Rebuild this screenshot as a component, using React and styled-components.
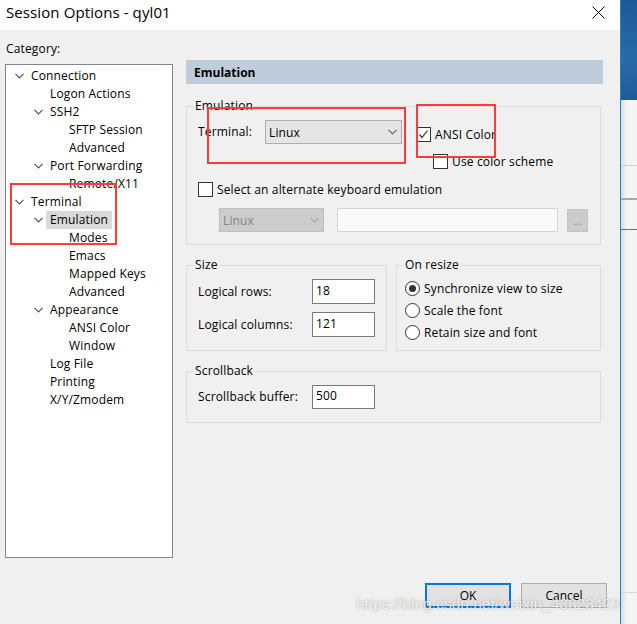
import styled, { createGlobalStyle } from "styled-components";

const GlobalStyle = createGlobalStyle`
	html, body {
		margin: 0;
		padding: 0;
		background: #f0f0f0;
	}
	body {
		font-family: "Open Sans", "Noto Sans", sans-serif;
		font-size: 12px;
		letter-spacing: 0.15px;
		color: #000;
	}
`;

const Screen = styled.div`
	position: relative;
	display: flex;
	width: 637px;
	height: 624px;
	overflow: hidden;
`;

const Dialog = styled.div`
	display: flex;
	flex-direction: column;
	width: 620px;
	flex-shrink: 0;
	background: #f0f0f0;
	border-right: 1px solid #1883d7;
`;

const TitleBar = styled.div`
	display: flex;
	align-items: flex-start;
	justify-content: space-between;
	height: 30px;
	background: #fff;
	padding: 2px 0 0 6px;
	box-sizing: border-box;
`;

const Title = styled.div`
	font-size: 15px;
	line-height: 20px;
	letter-spacing: 0.1px;
`;

const CloseIcon = styled.svg`
	margin: 4px 15px 0 0;
`;

const Main = styled.div`
	display: flex;
	padding-left: 5px;
	gap: 13px;
`;

const LeftCol = styled.div`
	display: flex;
	flex-direction: column;
	width: 168px;
`;

const CategoryLabel = styled.div`
	margin: 11px 0 7px 1px;
	line-height: 16px;
`;

const Tree = styled.div`
	height: 494px;
	box-sizing: border-box;
	background: #fff;
	border: 1px solid #828790;
	padding-top: 2px;
`;

const TreeRow = styled.div`
	display: flex;
	align-items: center;
	height: 18px;
	padding-left: ${(p) => 5 + p.depth * 19}px;
	white-space: nowrap;
`;

const Expander = styled.span`
	display: flex;
	align-items: center;
	width: 20px;
	height: 18px;
	padding-left: 4px;
	box-sizing: border-box;
`;

const TreeLabel = styled.span`
	line-height: 18px;
	padding: 0 4px;
	margin-left: -4px;
	background: ${(p) => (p.selected ? "#d9d9d9" : "transparent")};
`;

const RightCol = styled.div`
	display: flex;
	flex-direction: column;
	width: 417px;
	padding-top: 30px;
`;

const SectionHeader = styled.div`
	height: 24px;
	line-height: 25px;
	background: #bfcddb;
	padding-left: 8px;
	font-weight: 700;
	letter-spacing: 0;
`;

const Group = styled.fieldset`
	margin: ${(p) => p.top}px 0 0 0;
	padding: 6px 8px ${(p) => p.padBottom}px ${(p) => p.padLeft}px;
	border: 1px solid #dcdcdc;
	min-width: 0;
	width: ${(p) => p.width}px;
	box-sizing: border-box;
	flex-shrink: 0;
`;

const Legend = styled.legend`
	padding: 0 2px;
	margin-left: ${(p) => 6 - p.padLeft}px;
	line-height: 16px;
`;

const Row = styled.div`
	display: flex;
	align-items: ${(p) => p.align || "center"};
	margin-top: ${(p) => p.top || 0}px;
	margin-left: ${(p) => p.indent || 0}px;
`;

const FieldLabel = styled.span`
	width: ${(p) => p.width}px;
	line-height: 24px;
	flex-shrink: 0;
`;

const Select = styled.div`
	display: flex;
	align-items: center;
	justify-content: space-between;
	width: ${(p) => p.width}px;
	height: 24px;
	box-sizing: border-box;
	padding: 0 4px 0 3px;
	background: ${(p) => (p.disabled ? "#cccccc" : "#e5e5e5")};
	border: 1px solid ${(p) => (p.disabled ? "#bfbfbf" : "#adadad")};
	color: ${(p) => (p.disabled ? "#838383" : "#000")};
	flex-shrink: 0;
`;

const CheckColumn = styled.div`
	display: flex;
	flex-direction: column;
	margin: 7px 0 0 14px;
`;

const CheckItem = styled.label`
	display: flex;
	align-items: center;
	gap: 4px;
	height: 15px;
	margin-top: ${(p) => p.top || 0}px;
	margin-left: ${(p) => p.indent || 0}px;
	white-space: nowrap;
`;

const Box = styled.span`
	display: flex;
	align-items: center;
	justify-content: center;
	width: 15px;
	height: 15px;
	box-sizing: border-box;
	border: 1px solid #333;
	background: #fff;
	flex-shrink: 0;
`;

const TextBox = styled.div`
	width: ${(p) => p.width}px;
	height: ${(p) => p.height || 24}px;
	box-sizing: border-box;
	margin-left: ${(p) => p.gap || 0}px;
	background: ${(p) => (p.disabled ? "#f9f9f9" : "#fff")};
	border: 1px solid ${(p) => (p.disabled ? "#d6d6d6" : "#7a7a7a")};
	padding-left: 3px;
	line-height: ${(p) => (p.height || 24) - 4}px;
	flex-shrink: 0;
`;

const Ellipsis = styled.div`
	width: 21px;
	height: 23px;
	box-sizing: border-box;
	background: #cccccc;
	border: 1px solid #c4c4c4;
	color: #8a8a8a;
	text-align: center;
	line-height: 22px;
	font-size: 11px;
	letter-spacing: 0;
	margin-left: 9px;
`;

const SplitRow = styled.div`
	display: flex;
	gap: 9px;
	margin-top: 12px;
`;

const RadioList = styled.div`
	margin-top: -2px;
`;

const RadioItem = styled.div`
	display: flex;
	align-items: center;
	gap: 4px;
	height: 22px;
	white-space: nowrap;
`;

const Radio = styled.span`
	display: flex;
	align-items: center;
	justify-content: center;
	width: 15px;
	height: 15px;
	box-sizing: border-box;
	border-radius: 50%;
	border: 1px solid #333;
	background: #fff;
	&::after {
		content: "";
		width: 7px;
		height: 7px;
		border-radius: 50%;
		background: ${(p) => (p.checked ? "#333" : "transparent")};
	}
`;

const Footer = styled.div`
	display: flex;
	justify-content: flex-end;
	gap: 10px;
	margin-top: 25px;
	padding-right: 13px;
`;

const Button = styled.button`
	width: 86px;
	height: 25px;
	box-sizing: border-box;
	background: #e1e1e1;
	border: ${(p) => (p.primary ? "2px solid #0078d7" : "1px solid #adadad")};
	font-family: inherit;
	font-size: 12px;
	color: #000;
	padding: 0;
`;

const BackWindow = styled.div`
	flex: 1;
	display: flex;
	flex-direction: column;
	background: linear-gradient(to right, #dcdcdc, #f4f4f4 6px);
`;

const Desktop = styled.div`
	height: 100px;
	background: linear-gradient(to bottom, #1b5a96, #2a6aa8 60%, #1e5c98);
`;

const BackLine = styled.div`
	margin-top: ${(p) => p.top}px;
	height: ${(p) => p.size || 1}px;
	background: ${(p) => p.color};
`;

const Mark = styled.div`
	position: absolute;
	left: ${(p) => p.x}px;
	top: ${(p) => p.y}px;
	width: ${(p) => p.w}px;
	height: ${(p) => p.h}px;
	box-sizing: border-box;
	border: 2px solid #ff3b3b;
	pointer-events: none;
`;

const Watermark = styled.div`
	position: absolute;
	left: 356px;
	top: 595px;
	font-family: "Liberation Sans", Arial, sans-serif;
	font-size: 15.5px;
	letter-spacing: 0;
	color: rgba(255, 255, 255, 0.8);
	text-shadow: 0 0 2px rgba(70, 70, 70, 0.5);
	white-space: nowrap;
	pointer-events: none;
`;

const Chevron = ({ color = "#555" }) => (
	<svg width="9" height="6" viewBox="0 0 9 6">
		<path d="M0.5 0.8 L4.5 4.8 L8.5 0.8" fill="none" stroke={color} strokeWidth="1.2" />
	</svg>
);

const tree = [
	{ label: "Connection", depth: 0, open: true },
	{ label: "Logon Actions", depth: 1 },
	{ label: "SSH2", depth: 1, open: true },
	{ label: "SFTP Session", depth: 2 },
	{ label: "Advanced", depth: 2 },
	{ label: "Port Forwarding", depth: 1, open: true },
	{ label: "Remote/X11", depth: 2 },
	{ label: "Terminal", depth: 0, open: true },
	{ label: "Emulation", depth: 1, open: true, selected: true },
	{ label: "Modes", depth: 2 },
	{ label: "Emacs", depth: 2 },
	{ label: "Mapped Keys", depth: 2 },
	{ label: "Advanced", depth: 2 },
	{ label: "Appearance", depth: 1, open: true },
	{ label: "ANSI Color", depth: 2 },
	{ label: "Window", depth: 2 },
	{ label: "Log File", depth: 1 },
	{ label: "Printing", depth: 1 },
	{ label: "X/Y/Zmodem", depth: 1 },
];

export default function App() {
	return (
		<Screen>
			<GlobalStyle />
			<Dialog>
				<TitleBar>
					<Title>Session Options - qyl01</Title>
					<CloseIcon width="13" height="13" viewBox="0 0 13 13">
						<path d="M0.5 0.5 L12.5 12.5 M12.5 0.5 L0.5 12.5" stroke="#000" strokeWidth="1" />
					</CloseIcon>
				</TitleBar>

				<Main>
					<LeftCol>
						<CategoryLabel>Category:</CategoryLabel>
						<Tree>
							{tree.map((item, i) => (
								<TreeRow key={i} depth={item.depth}>
									<Expander>{item.open && <Chevron />}</Expander>
									<TreeLabel selected={item.selected}>{item.label}</TreeLabel>
								</TreeRow>
							))}
						</Tree>
					</LeftCol>

					<RightCol>
						<SectionHeader>Emulation</SectionHeader>

						<Group top={14} width={415} padLeft={11} padBottom={12}>
							<Legend padLeft={11}>Emulation</Legend>
							<Row align="flex-start">
								<FieldLabel width={67}>Terminal:</FieldLabel>
								<Select width={137}>
									Linux
									<Chevron color="#666" />
								</Select>
								<CheckColumn>
									<CheckItem>
										<Box>
											<svg width="11" height="11" viewBox="0 0 11 11">
												<path d="M1.5 5.5 L4 8.5 L9.5 1.5" fill="none" stroke="#333" strokeWidth="1.2" />
											</svg>
										</Box>
										ANSI Color
									</CheckItem>
									<CheckItem top={12} indent={17}>
										<Box />
										Use color scheme
									</CheckItem>
								</CheckColumn>
							</Row>
							<Row top={13}>
								<CheckItem>
									<Box />
									Select an alternate keyboard emulation
								</CheckItem>
							</Row>
							<Row top={11} indent={21}>
								<Select width={105} disabled>
									Linux
									<Chevron color="#a5a5a5" />
								</Select>
								<TextBox width={221} gap={13} disabled />
								<Ellipsis>...</Ellipsis>
							</Row>
						</Group>

						<SplitRow>
							<Group top={0} width={201} padLeft={11} padBottom={13}>
								<Legend padLeft={11}>Size</Legend>
								<Row>
									<FieldLabel width={114}>Logical rows:</FieldLabel>
									<TextBox width={63} height={25}>18</TextBox>
								</Row>
								<Row top={8}>
									<FieldLabel width={114}>Logical columns:</FieldLabel>
									<TextBox width={63} height={25}>121</TextBox>
								</Row>
							</Group>
							<Group top={0} width={205} padLeft={8} padBottom={6}>
								<Legend padLeft={8}>On resize</Legend>
								<RadioList>
									<RadioItem>
										<Radio checked />
										Synchronize view to size
									</RadioItem>
									<RadioItem>
										<Radio />
										Scale the font
									</RadioItem>
									<RadioItem>
										<Radio />
										Retain size and font
									</RadioItem>
								</RadioList>
							</Group>
						</SplitRow>

						<Group top={12} width={415} padLeft={11} padBottom={13}>
							<Legend padLeft={11}>Scrollback</Legend>
							<Row>
								<FieldLabel width={114}>Scrollback buffer:</FieldLabel>
								<TextBox width={63}>500</TextBox>
							</Row>
						</Group>
					</RightCol>
				</Main>

				<Footer>
					<Button primary>OK</Button>
					<Button>Cancel</Button>
				</Footer>
			</Dialog>

			<BackWindow>
				<Desktop />
				<BackLine top={65} color="#d0d0d0" />
				<BackLine top={32} size={2} color="#a8a8a8" />
				<BackLine top={29} color="#707070" />
				<BackLine top={362} color="#d8d8d8" />
			</BackWindow>

			<Mark x={10} y={183} w={107} h={62} />
			<Mark x={207} y={107} w={199} h={57} />
			<Mark x={416} y={104} w={80} h={54} />

			<Watermark>https://blog.csdn.net/weixin_43823423</Watermark>
		</Screen>
	);
}
